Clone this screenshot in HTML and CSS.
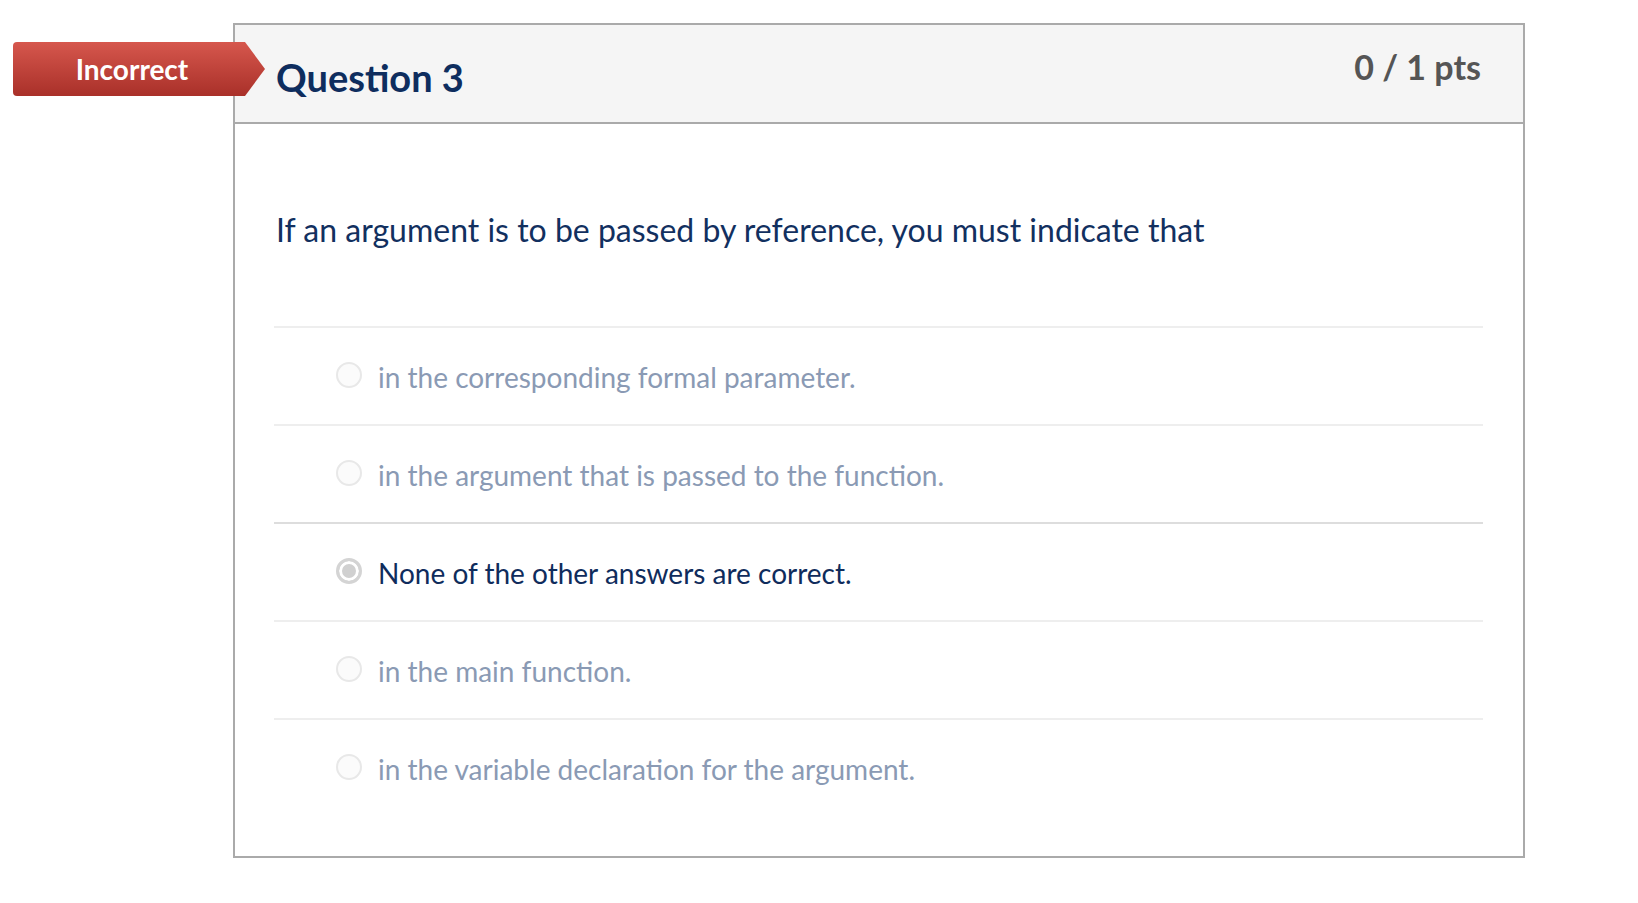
FILE: index.html
```html
<!DOCTYPE html>
<html>
<head>
<meta charset="utf-8">
<link rel="stylesheet" href="styles.css">
</head>
<body>
<div class="page">
  <div class="badge">Incorrect</div>
  <div class="question">
    <div class="header">
      <div class="title">Question 3</div>
      <div class="points">0 / 1 pts</div>
    </div>
    <div class="content">
      <div class="prompt">If an argument is to be passed by reference, you must indicate that</div>
      <div class="answers">
        <div class="answer"><span class="radio"></span><span class="label">in the corresponding formal parameter.</span></div>
        <div class="answer"><span class="radio"></span><span class="label">in the argument that is passed to the function.</span></div>
        <div class="answer selected"><span class="radio"></span><span class="label">None of the other answers are correct.</span></div>
        <div class="answer"><span class="radio"></span><span class="label">in the main function.</span></div>
        <div class="answer"><span class="radio"></span><span class="label">in the variable declaration for the argument.</span></div>
      </div>
    </div>
  </div>
</div>
</body>
</html>
```

FILE: styles.css
```css
html, body {
  margin: 0;
  padding: 0;
  background: #fff;
  font-family: Lato, "Open Sans", "Liberation Sans", sans-serif;
}

.page {
  position: relative;
  padding: 23px 0 0 233px;
}

.badge {
  position: absolute;
  left: 13px;
  top: 42px;
  width: 252px;
  height: 54px;
  box-sizing: border-box;
  padding-right: 14px;
  line-height: 54px;
  text-align: center;
  color: #fff;
  font-size: 28px;
  font-weight: 700;
  background: linear-gradient(#d6574d, #a93029);
  border-radius: 4px 0 0 4px;
  clip-path: polygon(0 0, 232px 0, 100% 50%, 232px 100%, 0 100%);
  z-index: 2;
}

.question {
  width: 1292px;
  box-sizing: border-box;
  border: 2px solid #aaa;
}

.header {
  height: 97px;
  background: #f5f5f5;
  border-bottom: 2px solid #aaa;
  display: flex;
  justify-content: space-between;
  align-items: flex-start;
  padding: 0 42px;
}

.title {
  font-size: 38px;
  font-weight: 700;
  line-height: 1.2;
  color: #0e2d5e;
  padding-top: 30px;
  margin-left: -1px;
}

.points {
  font-size: 34px;
  font-weight: 700;
  line-height: 1.2;
  color: #555;
  padding-top: 22px;
}

.content {
  padding: 87px 40px 40px 37px;
}

.prompt {
  font-size: 32px;
  line-height: 1.2;
  color: #12305f;
  padding-left: 4px;
  margin-bottom: 77px;
}

.answers {
  margin-left: 2px;
}

.answer {
  height: 96px;
  border-top: 2px solid #eee;
  display: flex;
  align-items: center;
  padding-left: 62px;
  gap: 16px;
}

.answer.selected {
  border-top-color: #ddd;
}

.radio {
  width: 26px;
  height: 26px;
  box-sizing: border-box;
  border-radius: 50%;
  border: 2px solid #e8e8e8;
  background: #fbfbfb;
  flex: none;
  margin-bottom: 2px;
}

.selected .radio {
  border: 3px solid #d4d4d4;
  background: #d0d0d0;
  box-shadow: inset 0 0 0 3px #fff;
}

.label {
  font-size: 28px;
  line-height: 1.2;
  color: #8a9ab4;
  padding-top: 2px;
}

.selected .label {
  color: #0f2c5c;
}
```
